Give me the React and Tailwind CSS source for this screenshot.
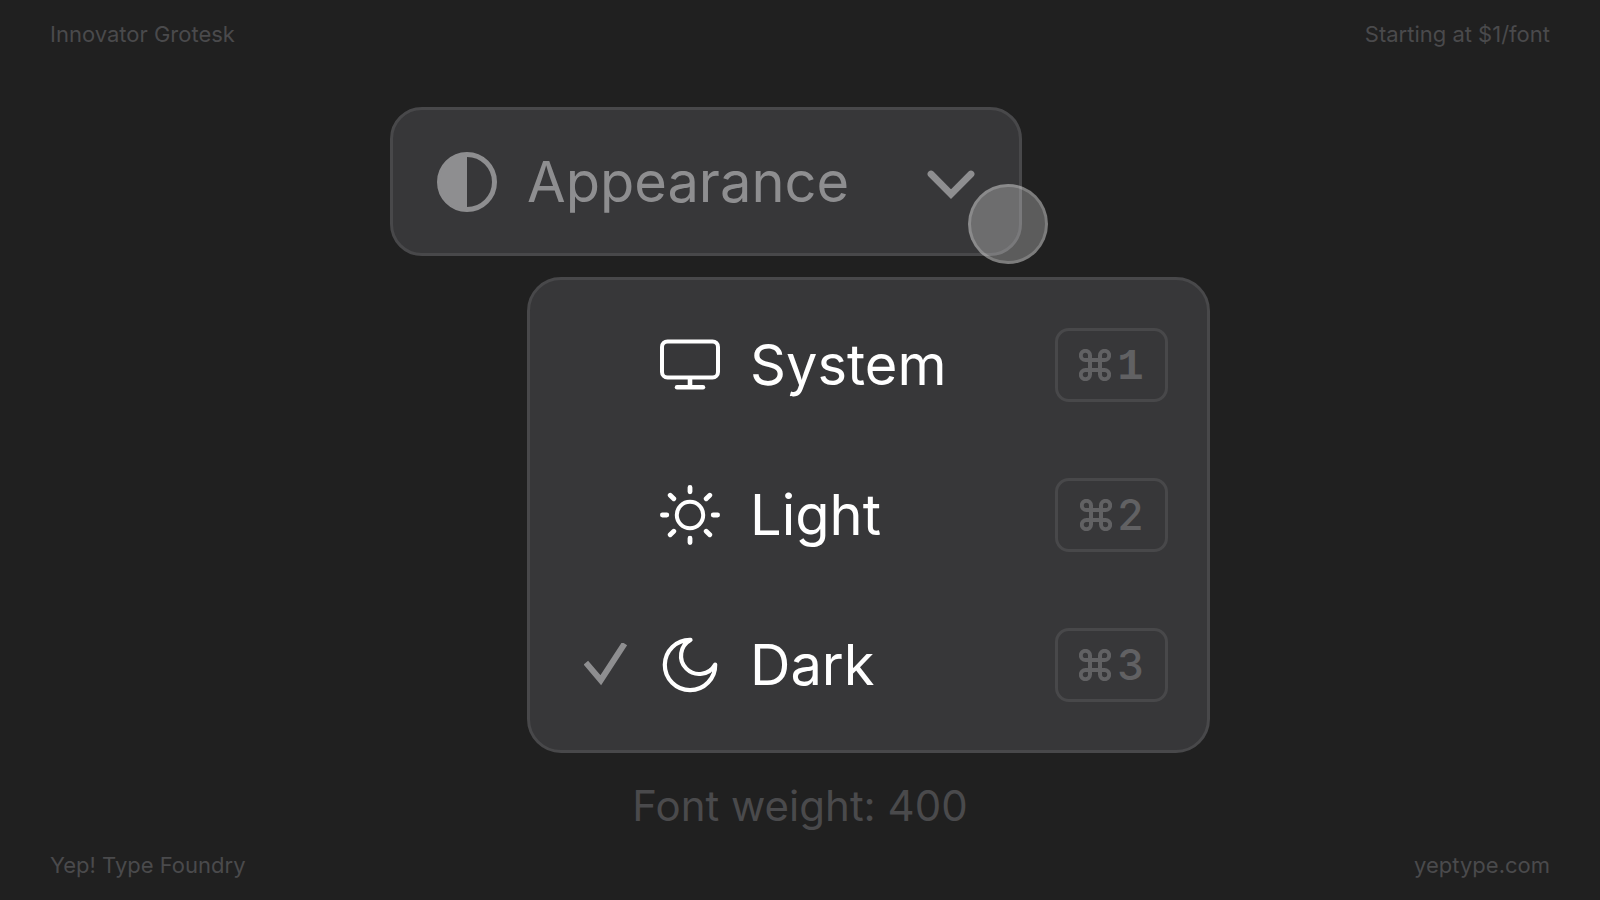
import { useState } from 'react';

function AppearanceIcon() {
  return (
    <svg width="60" height="60" viewBox="0 0 60 60" fill="none" aria-hidden="true" className="shrink-0">
      <circle cx="30" cy="30" r="27.5" stroke="currentColor" strokeWidth="5" />
      <path d="M30 2.5a27.5 27.5 0 0 0 0 55z" fill="currentColor" />
    </svg>
  );
}

function ChevronIcon() {
  return (
    <svg width="48" height="48" viewBox="0 0 48 48" fill="none" aria-hidden="true" className="shrink-0">
      <path d="M4 16 24 36.2 44 16" stroke="currentColor" strokeWidth="6.8" strokeLinecap="round" />
    </svg>
  );
}

function CheckIcon() {
  return (
    <svg width="44" height="44" viewBox="0 0 44 44" fill="none" aria-hidden="true">
      <path d="M1.8 19.6 16.8 37.2 40.6 0.6" stroke="currentColor" strokeWidth="6" />
    </svg>
  );
}

function SystemIcon() {
  return (
    <svg width="60" height="60" viewBox="0 0 60 60" fill="none" stroke="currentColor" strokeWidth="4" aria-hidden="true">
      <rect x="2" y="6.4" width="56" height="36" rx="5.5" />
      <path d="M30 42v10" strokeWidth="4.6" />
      <path d="M17 52.3h26" strokeLinecap="round" strokeWidth="4.4" />
    </svg>
  );
}

function LightIcon() {
  return (
    <svg width="60" height="60" viewBox="0 0 60 60" fill="none" stroke="currentColor" strokeWidth="4" aria-hidden="true">
      <circle cx="30" cy="30" r="13.2" />
      <path
        d="M30 2.4v4.4M30 53.2v4.4M2.4 30h4.4M53.2 30h4.4M10.2 10.2l3.6 3.6M46.2 46.2l3.6 3.6M10.2 49.8l3.6-3.6M46.2 13.8l3.6-3.6"
        strokeLinecap="round"
        strokeWidth="4.8"
      />
    </svg>
  );
}

function DarkIcon() {
  return (
    <svg width="60" height="60" viewBox="0 0 60 60" fill="none" aria-hidden="true">
      <path
        d="M30.5 4.8A25.2 25.2 0 1 0 55.2 29.5A18.2 18.2 0 1 1 30.5 4.8z"
        stroke="currentColor"
        strokeWidth="4.2"
        strokeLinejoin="round"
      />
    </svg>
  );
}

function CommandIcon() {
  return (
    <svg width="32" height="32" viewBox="0 0 32 32" fill="none" aria-label="Command">
      <path
        d="M11 11V6.4A4.6 4.6 0 1 0 6.4 11H25.6A4.6 4.6 0 1 0 21 6.4V25.6A4.6 4.6 0 1 0 25.6 21H6.4A4.6 4.6 0 1 0 11 25.6Z"
        stroke="currentColor"
        strokeWidth="4"
      />
    </svg>
  );
}

const options = [
  { id: 'system', label: 'System', Icon: SystemIcon, digit: '1', digitFont: "font-['Liberation_Mono',monospace] font-bold text-[44px]" },
  { id: 'light', label: 'Light', Icon: LightIcon, digit: '2', digitFont: 'font-medium' },
  { id: 'dark', label: 'Dark', Icon: DarkIcon, digit: '3', digitFont: 'font-medium' },
];

export default function App() {
  const [open, setOpen] = useState(true);
  const [selected, setSelected] = useState('dark');

  return (
    <div className="flex min-h-screen flex-col bg-[#202020] font-['Inter',sans-serif] text-[#4a4a4c]">
      <header className="flex justify-between px-[50px] pt-5 text-[22px] leading-7">
        <span>Innovator Grotesk</span>
        <span>Starting at $1/font</span>
      </header>

      <main className="flex flex-1 flex-col items-center px-4 pt-[59px]">
        <div className="flex w-full max-w-[820px] flex-col gap-[21px]">
          <div className="relative w-full max-w-[632px]">
            <button
              type="button"
              aria-haspopup="menu"
              aria-expanded={open}
              onClick={() => setOpen(!open)}
              className="flex h-[149px] w-full items-center rounded-[32px] border-3 border-[#48484a] bg-[#373739] pr-11 pl-11 text-[56px] leading-[64px] text-[#8e8e90]"
            >
              <AppearanceIcon />
              <span className="ml-[30px] flex-1 text-left">Appearance</span>
              <ChevronIcon />
            </button>

            {/* Touch pointer */}
            <div className="pointer-events-none absolute -right-[26px] -bottom-2 z-10 size-20 rounded-full border-3 border-white/20 bg-white/27" />
          </div>

          {open && (
            <ul role="menu" aria-label="Appearance" className="w-full max-w-[683px] self-end rounded-[34px] border-3 border-[#48484a] bg-[#373739] py-2.5">
              {options.map(({ id, label, Icon, digit, digitFont }) => (
                <li key={id} role="none">
                  <button
                    type="button"
                    role="menuitemradio"
                    aria-checked={selected === id}
                    onClick={() => setSelected(id)}
                    className="flex h-[150px] w-full items-center pr-[39px] pl-[54px] text-[56px] leading-[64px] text-white"
                  >
                    <span className="w-[76px] shrink-0 text-[#8e8e90]">{selected === id && <CheckIcon />}</span>
                    <Icon />
                    <span className="ml-[30px] flex-1 text-left">{label}</span>
                    <kbd className="flex h-[74px] w-[113px] items-center justify-center gap-1.5 rounded-[14px] border-3 border-[#48484a] font-['Inter',sans-serif] text-[42px] text-[#616163]">
                      <CommandIcon />
                      <span>
                        <span className={digitFont}>{digit}</span>
                      </span>
                    </kbd>
                  </button>
                </li>
              ))}
            </ul>
          )}
        </div>

        <p className="mt-7 text-[42px] leading-[50px]">Font weight: 400</p>
      </main>

      <footer className="flex justify-between px-[50px] pb-[21px] text-[22px] leading-7">
        <span>Yep! Type Foundry</span>
        <a href="#yeptype">yeptype.com</a>
      </footer>
    </div>
  );
}
